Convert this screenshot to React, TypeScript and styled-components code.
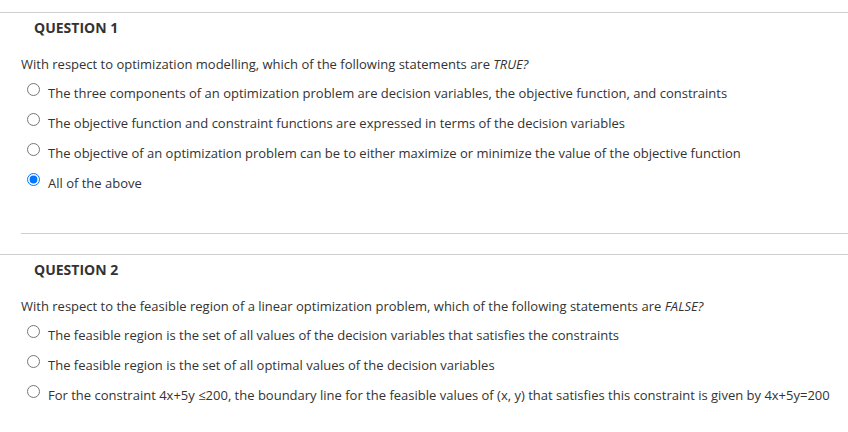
import React from "react";
import styled, { createGlobalStyle } from "styled-components";

const GlobalStyle = createGlobalStyle`
  body {
    margin: 0;
    background: #fff;
    font-family: "Open Sans", "Liberation Sans", sans-serif;
    color: #333;
  }
`;

const Page = styled.div`
  padding-top: 12px;
  width: 848px;
  height: 432px;
  overflow: hidden;
  box-sizing: border-box;
`;

const Section = styled.section`
  border-top: 1px solid #cfcfcf;
  padding-top: 5px;
`;

const Heading = styled.h3`
  margin: 0;
  padding-left: 34px;
  font-size: 14px;
  line-height: 20px;
  font-weight: 700;
  color: #333;
`;

const Prompt = styled.p`
  margin: 17px 0 5px 21px;
  font-size: 13px;
  line-height: 18px;
  white-space: nowrap;
`;

const Options = styled.div`
  display: flex;
  flex-direction: column;
`;

const Option = styled.label`
  display: flex;
  align-items: center;
  height: 30px;
  padding-left: 27px;
  font-size: 13px;
  gap: 8px;
  white-space: nowrap;
`;

const Radio = styled.input`
  margin: 0 0 8px 0;
  width: 13px;
  height: 13px;
  flex: none;
`;

const Divider = styled.hr`
  margin: 35px 0 20px 21px;
  border: none;
  border-top: 1px solid #cfcfcf;
  height: 0;
`;

type Question = {
  title: string;
  prompt: string;
  emphasis: string;
  options: string[];
  selected?: number;
};

const questions: Question[] = [
  {
    title: "QUESTION 1",
    prompt: "With respect to optimization modelling, which of the following statements are ",
    emphasis: "TRUE?",
    options: [
      "The three components of an optimization problem are decision variables, the objective function, and constraints",
      "The objective function and constraint functions are expressed in terms of the decision variables",
      "The objective of an optimization problem can be to either maximize or minimize the value of the objective function",
      "All of the above",
    ],
    selected: 3,
  },
  {
    title: "QUESTION 2",
    prompt:
      "With respect to the feasible region of a linear optimization problem, which of the following statements are ",
    emphasis: "FALSE?",
    options: [
      "The feasible region is the set of all values of the decision variables that satisfies the constraints",
      "The feasible region is the set of all optimal values of the decision variables",
      "For the constraint 4x+5y \u2264200, the boundary line for the feasible values of (x, y) that satisfies this constraint is given by 4x+5y=200",
    ],
  },
];

const App: React.FC = () => {
  return (
    <Page>
      <GlobalStyle />
      {questions.map((q, qi) => (
        <Section key={q.title}>
          <Heading>{q.title}</Heading>
          <Prompt>
            {q.prompt}
            <em>{q.emphasis}</em>
          </Prompt>
          <Options>
            {q.options.map((opt, oi) => (
              <Option key={oi}>
                <Radio
                  type="radio"
                  name={`q${qi}`}
                  defaultChecked={q.selected === oi}
                />
                {opt}
              </Option>
            ))}
          </Options>
          {qi === 0 && <Divider />}
        </Section>
      ))}
    </Page>
  );
};

export default App;
